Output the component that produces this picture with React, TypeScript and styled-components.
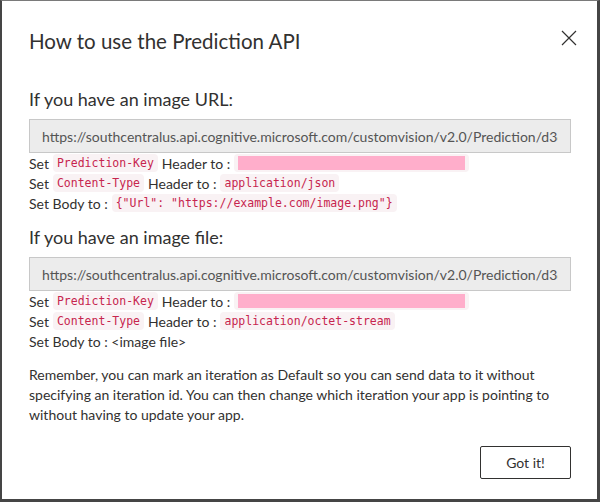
import React from "react";
import styled, { createGlobalStyle } from "styled-components";

const Global = createGlobalStyle`
  html, body { margin: 0; padding: 0; background: #4a4a4a; }
  body { width: 600px; height: 502px; overflow: hidden; }
  * { box-sizing: border-box; }
`;

const Frame = styled.div`
  width: 600px;
  height: 502px;
  border-style: solid;
  border-color: #7a7a7a #454545 #454545 #454545;
  border-width: 1px 3px 3px 2px;
  background: #ffffff;
`;

const Dialog = styled.div`
  height: 100%;
  padding: 26px 26px 20px 27px;
  display: flex;
  flex-direction: column;
  font-family: "Segoe UI", Lato, "Open Sans", sans-serif;
  color: #323130;
`;

const Header = styled.div`
  display: flex;
  align-items: flex-start;
  justify-content: space-between;
`;

const Title = styled.h1`
  margin: 0;
  font-size: 20.5px;
  line-height: 28px;
  font-weight: 400;
  color: #323130;
`;

const CloseButton = styled.button`
  margin: 3px -6px 0 0;
  padding: 0;
  width: 16px;
  height: 16px;
  border: 0;
  background: transparent;
  display: flex;
  align-items: center;
  justify-content: center;
  cursor: pointer;
`;

const SectionTitle = styled.h2<{ $top: number }>`
  margin: ${(p) => p.$top}px 0 0 0;
  font-size: 18px;
  line-height: 24px;
  font-weight: 400;
  color: #323130;
`;

const UrlBox = styled.input`
  margin-top: 8px;
  width: 100%;
  height: 34px;
  padding: 0 12px;
  border: 1px solid #c8c8c8;
  background: #ececec;
  color: #555555;
  font-family: "Segoe UI", Lato, "Open Sans", sans-serif;
  font-size: 14px;
  outline: none;
`;

const Line = styled.div`
  display: flex;
  align-items: center;
  height: 20px;
  font-size: 14px;
  white-space: pre;
  color: #323130;
`;

const Code = styled.code`
  display: inline-flex;
  align-items: center;
  height: 18px;
  padding: 0 4px;
  margin: 0 4px;
  border-radius: 4px;
  background: #f9f2f4;
  color: #c7254e;
  font-family: "DejaVu Sans Mono", "Liberation Mono", monospace;
  font-size: 11.5px;
`;

const Redacted = styled.span`
  display: block;
  width: 227px;
  height: 14px;
  background: #ffaecb;
`;

const Note = styled.p`
  margin: 14px 0 0 0;
  font-size: 14px;
  line-height: 20px;
  color: #323130;
`;

const Footer = styled.div`
  margin-top: auto;
  display: flex;
  justify-content: flex-end;
`;

const PrimaryButton = styled.button`
  width: 91px;
  height: 33px;
  border: 1px solid #323130;
  border-radius: 2px;
  background: #ffffff;
  color: #323130;
  font-family: "Segoe UI", Lato, "Open Sans", sans-serif;
  font-size: 14px;
  cursor: pointer;
`;

const URL_TEXT =
  "https://southcentralus.api.cognitive.microsoft.com/customvision/v2.0/Prediction/d36f1a2c-8b4e-4c1d-9f3a-2e7b5c6d8a90/url?iterationId=3f2e1d0c";
const FILE_TEXT =
  "https://southcentralus.api.cognitive.microsoft.com/customvision/v2.0/Prediction/d36f1a2c-8b4e-4c1d-9f3a-2e7b5c6d8a90/image?iterationId=3f2e1d0c";

function CloseIcon() {
  return (
    <svg width="16" height="16" viewBox="0 0 16 16" fill="none">
      <path d="M1 1L15 15M15 1L1 15" stroke="#323130" strokeWidth="1.2" />
    </svg>
  );
}

function Instructions({ contentType, body }: { contentType: string; body: React.ReactNode }) {
  return (
    <>
      <Line>
        Set<Code>Prediction-Key</Code>Header to :<Code><Redacted /></Code>
      </Line>
      <Line>
        Set<Code>Content-Type</Code>Header to :<Code>{contentType}</Code>
      </Line>
      <Line>Set Body to :{body}</Line>
    </>
  );
}

export default function App() {
  return (
    <>
      <Global />
      <Frame>
        <Dialog>
          <Header>
            <Title>How to use the Prediction API</Title>
            <CloseButton aria-label="Close">
              <CloseIcon />
            </CloseButton>
          </Header>
          <SectionTitle $top={32}>If you have an image URL:</SectionTitle>
          <UrlBox readOnly value={URL_TEXT} />
          <Instructions
            contentType="application/json"
            body={<Code>{'{"Url": "https://example.com/image.png"}'}</Code>}
          />
          <SectionTitle $top={12}>If you have an image file:</SectionTitle>
          <UrlBox readOnly value={FILE_TEXT} />
          <Instructions contentType="application/octet-stream" body={" <image file>"} />
          <Note>
            Remember, you can mark an iteration as Default so you can send data to it without
            specifying an iteration id. You can then change which iteration your app is pointing to
            without having to update your app.
          </Note>
          <Footer>
            <PrimaryButton>Got it!</PrimaryButton>
          </Footer>
        </Dialog>
      </Frame>
    </>
  );
}
